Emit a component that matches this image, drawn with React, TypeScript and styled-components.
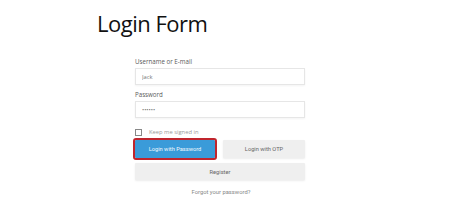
import React from "react"
import styled, { createGlobalStyle } from "styled-components"

const GlobalStyle = createGlobalStyle`
  html, body {
    margin: 0;
    padding: 0;
    background: #ffffff;
  }
`;

const Page = styled.div`
  width: 474px;
  height: 208px;
  overflow: hidden;
  padding-top: 8px;
  box-sizing: border-box;
`;

const Title = styled.h1`
  margin: 0 0 0 97px;
  font-family: "Open Sans", "Noto Sans", sans-serif;
  font-weight: 400;
  font-size: 22px;
  line-height: 30px;
  color: #111111;
  letter-spacing: -0.5px;
`;

const Form = styled.form`
  margin: 19px 0 0 135px;
  width: 170px;
  display: flex;
  flex-direction: column;
`;

const Label = styled.label`
  font-family: "Open Sans", "Noto Sans", sans-serif;
  font-size: 6.2px;
  line-height: 9px;
  color: #5a5a5a;
  margin-bottom: 2px;
`;

const Input = styled.input`
  box-sizing: border-box;
  width: 100%;
  height: 17px;
  border: 1px solid #e6e6e6;
  box-shadow: 0 1px 2px rgba(0, 0, 0, 0.05);
  padding: 0 6px;
  font-family: "Open Sans", "Noto Sans", sans-serif;
  font-size: 5.8px;
  color: #777777;
  margin-bottom: 5px;
  outline: none;
`;

const CheckRow = styled.div`
  display: flex;
  align-items: center;
  gap: 7px;
  margin-top: 5px;
  height: 8px;
`;

const Box = styled.span`
  width: 5px;
  height: 5px;
  border: 1px solid #888888;
  background: #ffffff;
`;

const CheckText = styled.span`
  font-family: "Open Sans", "Noto Sans", sans-serif;
  font-size: 5.8px;
  color: #999999;
`;

const ButtonRow = styled.div`
  display: grid;
  grid-template-columns: 80px 82px;
  justify-content: space-between;
  margin-top: 4px;
`;

const Button = styled.button<{ $primary?: boolean }>`
  box-sizing: border-box;
  height: 18px;
  border: none;
  border-radius: 1px;
  background: ${props => props.$primary ? "#3a9bd9" : "#efefef"};
  color: ${props => props.$primary ? "#f4f9fd" : "#666666"};
  outline: ${props => props.$primary ? "2px solid #c0252d" : "none"};
  box-shadow: ${props => props.$primary ? "none" : "0 1px 2px rgba(0, 0, 0, 0.08)"};
  font-family: Roboto, "Liberation Sans", sans-serif;
  font-weight: 400;
  font-size: 5.7px;
  padding: 0;
`;

const Wide = styled(Button)`
  width: 100%;
  margin-top: 5px;
  height: 17px;
`;

const Forgot = styled.a`
  margin-top: 9px;
  text-align: center;
  font-family: Roboto, "Liberation Sans", sans-serif;
  font-size: 5.8px;
  color: #888888;
  text-decoration: none;
  padding-left: 2px;
`;

export default function App() {
  return <>
    <GlobalStyle />
    <Page>
      <Title>Login Form</Title>
      <Form onSubmit={e => e.preventDefault()}>
        <Label>Username or E-mail</Label>
        <Input defaultValue="Jack" />
        <Label>Password</Label>
        <Input type="password" defaultValue="pppppp" />
        <CheckRow>
          <Box />
          <CheckText>Keep me signed in</CheckText>
        </CheckRow>
        <ButtonRow>
          <Button $primary>Login with Password</Button>
          <Button>Login with OTP</Button>
        </ButtonRow>
        <Wide type="button">Register</Wide>
        <Forgot>Forgot your password?</Forgot>
      </Form>
    </Page>
  </>
}
